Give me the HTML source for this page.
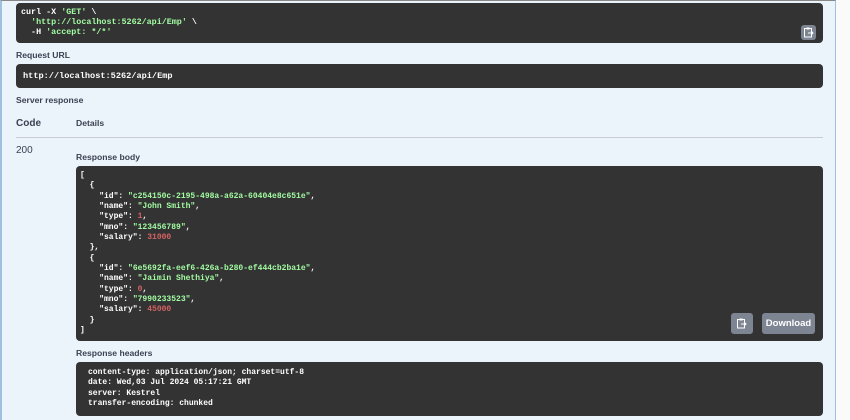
<!DOCTYPE html>
<html><head><style>
html,body{margin:0;padding:0;width:850px;height:420px;overflow:hidden;background:#fafafa;}
.wrap{position:absolute;left:0;top:0;width:836px;height:420px;background:#ebf3fb;border-left:2px solid #9fc0e0;border-right:1px solid #9fc0e0;border-top:1px solid #888;box-sizing:border-box;}
.blk{position:absolute;background:#333;border-radius:4px;font-family:"Liberation Mono",monospace;font-weight:bold;font-size:8px;color:#fff;white-space:pre;}
.lbl{position:absolute;font-family:"Liberation Sans",sans-serif;font-size:8.6px;color:#3b4151;font-weight:bold;}
.g{color:#a2fca2}.r{color:#d36363}
.btn{position:absolute;background:#7d8492;border-radius:3px;}
</style></head><body>
<div class="wrap"></div>
<div class="blk" style="left:16px;top:3px;width:807px;height:40px;line-height:10px;padding:4px 0 0 5px;box-sizing:border-box;font-size:8.4px;">curl -X <span class="g">'GET'</span> \
  <span class="g">'http://localhost:5262/api/Emp'</span> \
  -H <span class="g">'accept: */*'</span></div>
<div class="btn" style="left:801px;top:25px;width:15px;height:15px;"></div>
<svg style="position:absolute;left:803px;top:27px" width="11" height="11" viewBox="0 0 11 11"><rect x="1.5" y="1.5" width="7" height="8.5" fill="none" stroke="#fff"/><rect x="3.5" y="0.5" width="3" height="2" fill="#fff"/><path d="M5 6h5M8 4l2 2-2 2" stroke="#fff" fill="none"/></svg>
<div class="lbl" style="left:16px;top:50px;">Request URL</div>
<div class="blk" style="left:16px;top:64px;width:807px;height:24px;line-height:24px;padding-left:7px;box-sizing:border-box;font-size:8.6px;">http://localhost:5262/api/Emp</div>
<div class="lbl" style="left:16px;top:95px;">Server response</div>
<div class="lbl" style="left:16px;top:118px;font-size:10px;">Code</div>
<div class="lbl" style="left:76px;top:118px;">Details</div>
<div style="position:absolute;left:16px;top:137px;width:807px;height:1px;background:#c8ccd2"></div>
<div class="lbl" style="left:16px;top:145px;font-size:10px;font-weight:normal;">200</div>
<div class="lbl" style="left:76px;top:152px;">Response body</div>
<div class="blk" style="left:76px;top:166px;width:747px;height:175px;line-height:10.35px;padding:5px 0 0 4px;box-sizing:border-box;">[
  {
    "id": <span class="g">"c254150c-2195-498a-a62a-60404e8c651e"</span>,
    "name": <span class="g">"John Smith"</span>,
    "type": <span class="r">1</span>,
    "mno": <span class="g">"123456789"</span>,
    "salary": <span class="r">31000</span>
  },
  {
    "id": <span class="g">"6e5692fa-eef6-426a-b280-ef444cb2ba1e"</span>,
    "name": <span class="g">"Jaimin Shethiya"</span>,
    "type": <span class="r">0</span>,
    "mno": <span class="g">"7990233523"</span>,
    "salary": <span class="r">45000</span>
  }
]</div>
<div class="btn" style="left:731px;top:313px;width:22px;height:21px;"></div>
<svg style="position:absolute;left:736px;top:318px" width="11" height="11" viewBox="0 0 11 11"><rect x="1.5" y="1.5" width="7" height="8.5" fill="none" stroke="#fff"/><rect x="3.5" y="0.5" width="3" height="2" fill="#fff"/><path d="M5 6h5M8 4l2 2-2 2" stroke="#fff" fill="none"/></svg>
<div class="btn" style="left:762px;top:313px;width:53px;height:21px;color:#fff;font-family:'Liberation Sans',sans-serif;font-weight:bold;font-size:9.5px;line-height:21px;text-align:center;">Download</div>
<div class="lbl" style="left:76px;top:348px;">Response headers</div>
<div class="blk" style="left:76px;top:362px;width:747px;height:54px;line-height:10.3px;padding:6px 0 0 12px;box-sizing:border-box;">content-type: application/json; charset=utf-8
date: Wed,03 Jul 2024 05:17:21 GMT
server: Kestrel
transfer-encoding: chunked</div>
</body></html>
